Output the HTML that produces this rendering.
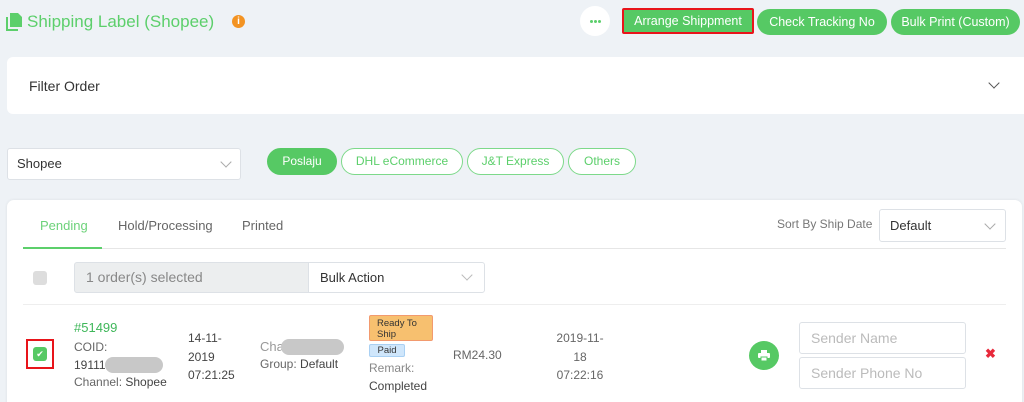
<!DOCTYPE html>
<html><head><meta charset="utf-8"><style>
*{box-sizing:border-box;margin:0;padding:0}
html,body{width:1024px;height:402px;overflow:hidden}
body{background:#eef2f6;font-family:"Liberation Sans",sans-serif;position:relative;color:#555}
.a{position:absolute;white-space:nowrap}
.btn{position:absolute;background:#56c964;color:#fff;font-size:12.5px;border-radius:14px;text-align:center;line-height:26px;height:26px;top:9px}
.pill{position:absolute;top:148px;height:27px;border:1px solid #7dd98a;border-radius:14px;color:#5ccf6b;font-size:12px;text-align:center;line-height:25px;background:#fff}
.sel{position:absolute;background:#fff;border:1px solid #dde1e6;border-radius:3px;font-size:13px;color:#333}
.chev{position:absolute;width:8px;height:8px;border-right:1px solid #aaa;border-bottom:1px solid #aaa;transform:rotate(45deg)}
.inp{position:absolute;left:799px;width:167px;height:32px;border:1px solid #dde1e6;border-radius:3px;background:#fff;color:#bbb;font-size:14px;padding-left:11px;line-height:30px}
.t{font-size:12px;color:#666}
</style></head><body>
<svg class="a" style="left:6px;top:13px" width="17" height="18" viewBox="0 0 17 18"><path d="M4 0h8l4 4v10H4z" fill="#5ccf6b"/><path d="M1 4v13h11" fill="none" stroke="#5ccf6b" stroke-width="2"/></svg>
<div class="a" style="left:27px;top:12px;font-size:17px;color:#5ccf6b">Shipping Label (Shopee)</div>
<div class="a" style="left:232px;top:15px;width:13px;height:13px;border-radius:50%;background:#f39322;color:#fff;font-size:10px;font-weight:bold;text-align:center;line-height:13px">i</div>
<div class="a" style="left:580px;top:6px;width:30px;height:30px;border-radius:50%;background:#fff"></div>
<div class="a" style="left:590px;top:20px;width:3px;height:3px;border-radius:50%;background:#5ccf6b;box-shadow:4px 0 #5ccf6b,8px 0 #5ccf6b"></div>
<div class="btn" style="left:622px;width:132px;top:8px;border:2px solid #e8141a;border-radius:2px;line-height:23px">Arrange Shippment</div>
<div class="btn" style="left:757px;width:130px">Check Tracking No</div>
<div class="btn" style="left:891px;width:129px">Bulk Print (Custom)</div>
<div class="a" style="left:7px;top:57px;width:1030px;height:57px;background:#fff;border-radius:6px"></div>
<div class="a" style="left:29px;top:78px;font-size:14px;color:#333">Filter Order</div>
<div class="chev" style="left:990px;top:79px;border-color:#555"></div>
<div class="sel" style="left:7px;top:148px;width:234px;height:32px;padding-left:9px;line-height:30px">Shopee</div>
<div class="chev" style="left:222px;top:158px"></div>
<div class="pill" style="left:267px;width:70px;background:#56c964;color:#fff;border-color:#56c964">Poslaju</div>
<div class="pill" style="left:341px;width:122px">DHL eCommerce</div>
<div class="pill" style="left:467px;width:97px">J&amp;T Express</div>
<div class="pill" style="left:568px;width:68px">Others</div>
<div class="a" style="left:7px;top:200px;width:1015px;height:210px;background:#fff;border-radius:7px;box-shadow:0 0 3px rgba(0,0,0,.08)"></div>
<div class="a" style="left:40px;top:218px;font-size:13px;color:#6dd27a">Pending</div>
<div class="a" style="left:118px;top:218px;font-size:13px;color:#666">Hold/Processing</div>
<div class="a" style="left:242px;top:218px;font-size:13px;color:#666">Printed</div>
<div class="a" style="left:23px;top:248px;width:983px;height:1px;background:#e6e6e6"></div>
<div class="a" style="left:23px;top:247px;width:79px;height:2px;background:#5ccf6b"></div>
<div class="a" style="left:777px;top:217px;font-size:12px;color:#777">Sort By Ship Date</div>
<div class="sel" style="left:879px;top:209px;width:127px;height:33px;padding-left:10px;line-height:31px">Default</div>
<div class="chev" style="left:986px;top:220px"></div>
<div class="a" style="left:33px;top:271px;width:14px;height:14px;border-radius:3px;background:#ddd"></div>
<div class="a" style="left:74px;top:262px;width:235px;height:31px;background:#eceeef;border:1px solid #dde1e6;border-radius:3px 0 0 3px;color:#888;font-size:14px;padding-left:11px;line-height:29px">1 order(s) selected</div>
<div class="sel" style="left:308px;top:262px;width:177px;height:31px;padding-left:11px;line-height:29px;border-radius:0 3px 3px 0">Bulk Action</div>
<div class="chev" style="left:463px;top:271px;border-color:#bbb"></div>
<div class="a" style="left:23px;top:304px;width:983px;height:1px;background:#eee"></div>
<div class="a" style="left:26px;top:339px;width:28px;height:30px;border:2px solid #e8141a"></div>
<div class="a" style="left:33px;top:347px;width:14px;height:14px;border-radius:3px;background:#56c964;color:#fff;font-size:9px;text-align:center;line-height:14px">✔</div>
<div class="a" style="left:74px;top:320px;font-size:13px;color:#3fb75a">#51499</div>
<div class="a t" style="left:74px;top:340px">COID:</div>
<div class="a t" style="left:74px;top:358px;color:#444">191114</div>
<div class="a" style="left:105px;top:357px;width:58px;height:16px;border-radius:8px;background:#c8c8c8"></div>
<div class="a t" style="left:74px;top:375px">Channel: <span style="color:#444">Shopee</span></div>
<div class="a t" style="left:188px;top:329px;line-height:18.5px;color:#444">14-11-<br>2019<br>07:21:25</div>
<div class="a t" style="left:260px;top:339px;color:#999;font-size:13px">Cha</div>
<div class="a" style="left:281px;top:339px;width:63px;height:16px;border-radius:8px;background:#c8c8c8"></div>
<div class="a t" style="left:260px;top:357px">Group: <span style="color:#444">Default</span></div>
<div class="a" style="left:369px;top:315px;width:64px;height:26px;background:#f7c06f;border:1px solid #f29a6e;border-radius:2px;font-size:9.5px;color:#333;padding:2px 0 0 7px;line-height:11px;white-space:normal">Ready To Ship</div>
<div class="a" style="left:369px;top:344px;width:36px;height:13px;background:#cfe6fb;border:1px solid #a9d0f3;border-radius:2px;font-size:9.5px;color:#333;text-align:center;line-height:11px">Paid</div>
<div class="a t" style="left:369px;top:361px;color:#888">Remark:</div>
<div class="a t" style="left:369px;top:379px;color:#444">Completed</div>
<div class="a t" style="left:453px;top:348px;color:#666">RM24.30</div>
<div class="a t" style="left:550px;top:329px;line-height:18.5px;text-align:center;width:60px">2019-11-<br>18<br>07:22:16</div>
<div class="a" style="left:749px;top:341px;width:30px;height:29px;border-radius:50%;background:#56c964"></div>
<svg class="a" style="left:758px;top:350px" width="12" height="11" viewBox="0 0 12 11"><rect x="3" y="0" width="6" height="3" fill="#fff"/><rect x="0" y="3" width="12" height="5" rx="1" fill="#fff"/><rect x="3" y="7" width="6" height="4" fill="#fff" stroke="#56c964" stroke-width="1"/></svg>
<div class="inp" style="top:322px">Sender Name</div>
<div class="inp" style="top:357px">Sender Phone No</div>
<div class="a" style="left:985px;top:346px;color:#e8293b;font-size:13px;font-weight:bold">✖</div>
</body></html>
